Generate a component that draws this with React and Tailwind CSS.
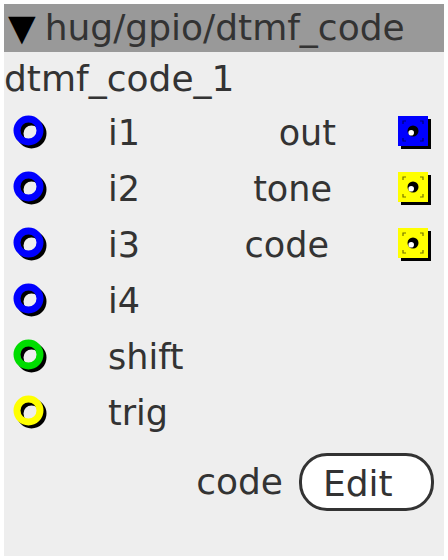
import React from "react";

const FONT = { fontFamily: '"DejaVu Sans", Verdana, sans-serif' };

function Ring({ color }) {
  return (
    <svg width="38" height="38" viewBox="0 0 38 38" className="block">
      <circle cx="18.5" cy="18.5" r="11.5" fill="none" stroke="#000" strokeWidth="7" />
      <circle cx="15.5" cy="15.5" r="11.5" fill="none" stroke={color} strokeWidth="7" />
    </svg>
  );
}

function Square({ color }) {
  const m = "rgba(0,0,0,0.55)";
  return (
    <svg width="36" height="36" viewBox="0 0 36 36" className="block">
      <rect x="3" y="3" width="30" height="30" fill="#000" />
      <rect x="0" y="0" width="30" height="30" fill={color} />
      <g stroke={m} strokeWidth="1.2" fill="none">
        <path d="M5 8 V5 H8" />
        <path d="M22 5 H25 V8" />
        <path d="M5 22 V25 H8" />
        <path d="M22 25 H25 V22" />
      </g>
      <circle cx="15" cy="15" r="5.5" fill="#000" />
      <circle cx="13.2" cy="16.8" r="2.8" fill="#fff" />
    </svg>
  );
}

const rows = [
  { l: "i1", lc: "#0000ff", r: "out", rc: "#0000ff", rp: "pr-0" },
  { l: "i2", lc: "#0000ff", r: "tone", rc: "#ffff00", rp: "pr-[4px]" },
  { l: "i3", lc: "#0000ff", r: "code", rc: "#ffff00", rp: "pr-[7px]" },
  { l: "i4", lc: "#0000ff" },
  { l: "shift", lc: "#00dd00" },
  { l: "trig", lc: "#ffff00" },
];

export default function App() {
  return (
    <div className="w-[448px] h-[560px] bg-white p-1" style={FONT}>
      <div className="h-[552px] bg-[#eeeeee] flex flex-col text-[#333333]">
        <div className="h-12 bg-[#999999] flex items-center pl-1 text-[36px] leading-none whitespace-nowrap">
          <span className="text-black">▼</span>
          <span className="ml-[9px]">hug/gpio/dtmf_code</span>
        </div>
        <div className="h-[53px] flex items-center text-[36px] leading-none">
          dtmf_code_1
        </div>
        <div className="flex flex-col">
          {rows.map((row) => (
            <div key={row.l} className="h-14 flex items-center text-[35px] leading-none">
              <div className="w-[104px] pl-[9px] pt-[2px] flex items-center">
                <Ring color={row.lc} />
              </div>
              <div className="w-[124px]">{row.l}</div>
              <div className={"w-[104px] text-right " + (row.rp || "")}>{row.r || ""}</div>
              <div className="w-[62px]" />
              <div className="pt-[2px]">{row.rc ? <Square color={row.rc} /> : null}</div>
            </div>
          ))}
        </div>
        <div className="mt-3 flex items-center justify-end pr-[10px] text-[36px] leading-none">
          <span className="mr-[16px]">code</span>
          <button className="w-[135px] h-[58px] rounded-[28px] border-[3px] border-[#333333] bg-white text-[#333333] text-[36px] leading-none flex items-center justify-start pl-[21px] pt-[3px]" style={FONT}>
            Edit
          </button>
        </div>
      </div>
    </div>
  );
}
